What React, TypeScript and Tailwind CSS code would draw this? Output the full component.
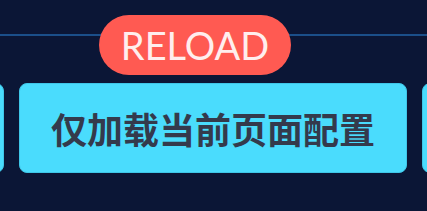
export default function App() {
  // only the middle button's label is visible; neighbours peek in at the edges
  const buttons = ['', '仅加载当前页面配置', ''];

  return (
    <div className="relative h-[211px] w-[427px] overflow-hidden bg-[#0b1636]">
      {/* divider line with reload badge sitting over it */}
      <div className="pt-[34px]">
        <div className="h-[2px] w-full bg-[#1b4f8a]" />
      </div>
      <div className="absolute left-[99px] top-[15px] flex h-[60px] w-[192px] items-center justify-center rounded-full bg-[#ff5a52]">
        <span
          className="text-[38px] leading-none text-[#ffeeee]"
          style={{ fontFamily: 'Lato, "Noto Sans", sans-serif' }}
        >
          RELOAD
        </span>
      </div>

      <div className="ml-[-384px] mt-[47px] flex gap-[15px]">
        {buttons.map((label, i) => (
          <button
            key={i}
            type="button"
            className="flex h-[90px] w-[388px] shrink-0 items-center justify-center rounded-[8px] border border-[#3fc6e8] bg-[#4adcfd] text-[36px] font-bold text-[#343a4c]"
            style={{ fontFamily: '"Noto Sans CJK SC", sans-serif' }}
          >
            {label}
          </button>
        ))}
      </div>
    </div>
  );
}
